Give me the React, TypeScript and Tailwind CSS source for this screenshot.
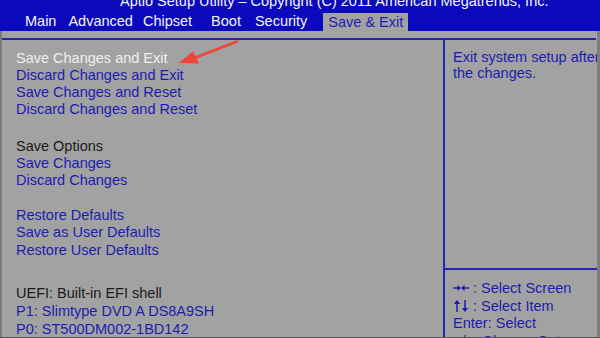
/**
 * BiosSaveExit
 * Aptio setup utility, "Save & Exit" screen
 */

const tabs = [
  { label: 'Main', className: 'ml-[25px]' },
  { label: 'Advanced', className: 'ml-[12px]' },
  { label: 'Chipset', className: 'ml-[10px]' },
  { label: 'Boot', className: 'ml-[19px]' },
  { label: 'Security', className: 'ml-[14px]' },
];

function SelectScreenIcon() {
  return (
    <svg width="16" height="10" viewBox="0 0 16 10" className="inline-block align-[0px]">
      <path d="M0 5 H5" stroke="#1c1cb0" strokeWidth="1.4" />
      <path d="M4.5 2 L8 5 L4.5 8 Z" fill="#1c1cb0" />
      <path d="M11.5 2 L8 5 L11.5 8 Z" fill="#1c1cb0" />
      <path d="M11 5 H16" stroke="#1c1cb0" strokeWidth="1.4" />
    </svg>
  );
}

function SelectItemIcon() {
  return (
    <svg width="16" height="12" viewBox="0 0 16 12" className="inline-block align-[-1px]">
      <path d="M4 3 V12" stroke="#1c1cb0" strokeWidth="1.5" />
      <path d="M0.8 4 L4 0 L7.2 4 Z" fill="#1c1cb0" />
      <path d="M12 0 V9" stroke="#1c1cb0" strokeWidth="1.5" />
      <path d="M8.8 8 L12 12 L15.2 8 Z" fill="#1c1cb0" />
    </svg>
  );
}

export default function App() {
  return (
    <div
      className="relative w-[600px] h-[338px] overflow-hidden bg-[#a2a2a2] text-[14.5px] text-[#1c1cb0]"
      style={{ fontFamily: '"Liberation Sans", Arial, sans-serif' }}
    >
      {/* 상단 파란 바 */}
      <div className="h-[31px] bg-[#0a0abc] flex flex-col">
        <div className="h-[12px] overflow-hidden">
          <div className="-mt-[7px] ml-[120px] leading-[17px] text-[#f4f4f4] whitespace-nowrap">
            Aptio Setup Utility – Copyright (C) 2011 American Megatrends, Inc.
          </div>
        </div>
        <div className="h-[19px] flex leading-[19px] text-[#f4f4f4] whitespace-nowrap">
          {tabs.map((t) => (
            <span key={t.label} className={t.className}>
              {t.label}
            </span>
          ))}
          <span className="ml-[16px] mt-[1px] leading-[18px] bg-[#a2a2a2] text-[#1c1cb0] px-[5px] w-[85px]">
            Save &amp; Exit
          </span>
        </div>
      </div>

      <div className="h-[7px]" />
      <div className="h-[2px] bg-[#2424b4] mr-[4px]" />

      {/* 본문 */}
      <div className="flex h-[298px]">
        <div className="w-[443px] shrink-0 pl-[16px] pt-[9.6px] leading-[17.3px] whitespace-nowrap">
          <div className="text-[#f0f0f0]">Save Changes and Exit</div>
          <div>Discard Changes and Exit</div>
          <div>Save Changes and Reset</div>
          <div>Discard Changes and Reset</div>

          <div className="mt-[19px] text-[#1a1a1a]">Save Options</div>
          <div>Save Changes</div>
          <div>Discard Changes</div>

          <div className="mt-[17.4px]">Restore Defaults</div>
          <div>Save as User Defaults</div>
          <div>Restore User Defaults</div>

          <div className="mt-[26.4px] leading-[17.6px] text-[#1a1a1a]">UEFI: Built-in EFI shell</div>
          <div className="leading-[17.6px]">P1: Slimtype DVD A DS8A9SH</div>
          <div className="leading-[17.6px]">P0: ST500DM002-1BD142</div>
        </div>

        <div className="w-[2px] shrink-0 bg-[#2424b4]" />

        <div className="flex-1 flex flex-col whitespace-nowrap">
          <div className="h-[228px] shrink-0 pl-[8px] pt-[8.5px] leading-[16.7px]">
            <div>Exit system setup after</div>
            <div>the changes.</div>
          </div>
          <div className="h-[2px] shrink-0 bg-[#2424b4]" />
          <div className="shrink-0 pl-[8px] pt-[10.2px] leading-[17.5px]">
            <div>
              <SelectScreenIcon /> : Select Screen
            </div>
            <div>
              <SelectItemIcon /> : Select Item
            </div>
            <div>Enter: Select</div>
            <div>+/- : Change Opt.</div>
          </div>
        </div>
      </div>

      {/* 테두리 */}
      <div className="absolute left-0 top-[31px] bottom-0 w-[2px] bg-[#7a7a7a]" />
      <div className="absolute right-0 top-[31px] bottom-0 w-[3px] bg-[#7e7e7e]" />
      <div className="absolute left-0 right-0 bottom-0 h-[1.5px] bg-[#555]" />

      {/* 빨간 화살표 */}
      <svg className="absolute left-0 top-0" width="600" height="338" viewBox="0 0 600 338">
        <path d="M237 41.5 L193 58.5" stroke="#f2453a" strokeWidth="2.6" strokeLinecap="round" />
        <path d="M178.5 63 L193 51.5 L199 63.5 Z" fill="#f2453a" />
      </svg>
    </div>
  );
}
